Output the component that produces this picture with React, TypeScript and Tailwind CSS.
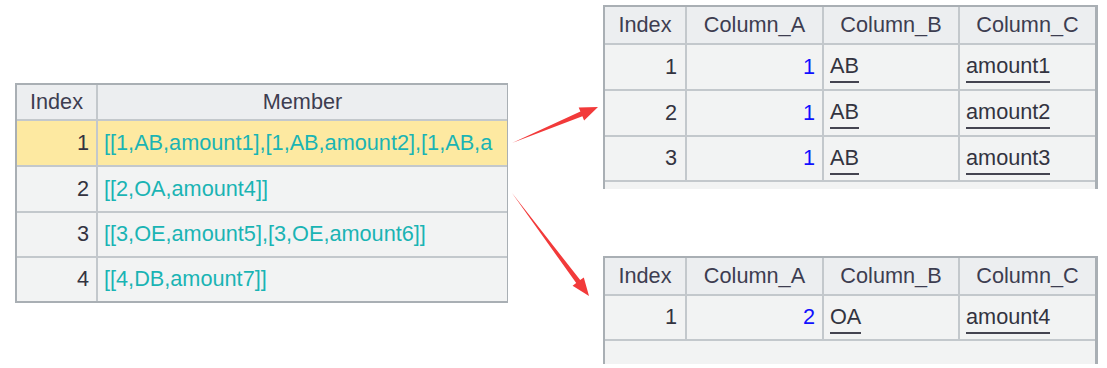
import React from "react";

const FONT = "font-['Liberation_Sans',Arial,sans-serif]";

function LeftTable() {
  const rows = [
    { i: 1, m: "[[1,AB,amount1],[1,AB,amount2],[1,AB,a", hl: true, h: "h-[46px]" },
    { i: 2, m: "[[2,OA,amount4]]", hl: false, h: "h-[46px]" },
    { i: 3, m: "[[3,OE,amount5],[3,OE,amount6]]", hl: false, h: "h-[45px]" },
    { i: 4, m: "[[4,DB,amount7]]", hl: false, h: "h-[45px]" },
  ];
  return (
    <div className="w-[493px] border-y-2 border-l-2 border-r border-[#a9afb4] bg-[#f2f3f3]">
      <div className="flex h-[34px] bg-[#eceef0] text-[#3d3d50]">
        <div className="w-[81px] flex items-center justify-center border-r-2 border-[#c3c8cc]">Index</div>
        <div className="flex-1 flex items-center justify-center">Member</div>
      </div>
      {rows.map((r) => (
        <div key={r.i} className={`flex border-t-2 border-[#c3c8cc] ${r.h} ${r.hl ? "bg-[#fde9a1]" : ""}`}>
          <div className="w-[81px] flex items-center justify-end pr-[7px] border-r-2 border-[#c3c8cc] text-[#333340]">{r.i}</div>
          <div className="flex-1 flex items-center pl-[6px] text-[#1ab4b4] whitespace-nowrap overflow-hidden">{r.m}</div>
        </div>
      ))}
    </div>
  );
}

type Row = { i: number; a: number; b: string; c: string; h: string };

function RightTable({ rows, strip }: { rows: Row[]; strip: string }) {
  const line = "border-[#c3c8cc]";
  return (
    <div className="w-[495px] border-t-2 border-l-2 border-r-[3px] border-[#a9afb4] bg-[#f2f3f3]">
      <div className="flex h-[36px] bg-[#eceef0] text-[#3d3d50]">
        <div className={`w-[82px] flex items-center justify-center border-r-2 ${line}`}>Index</div>
        <div className={`w-[137px] flex items-center justify-center border-r-2 ${line}`}>Column_A</div>
        <div className={`w-[136px] flex items-center justify-center border-r-2 ${line}`}>Column_B</div>
        <div className="flex-1 flex items-center justify-center">Column_C</div>
      </div>
      {rows.map((r) => (
        <div key={r.i} className={`flex border-t-2 ${line} ${r.h}`}>
          <div className={`w-[82px] flex items-center justify-end pr-[8px] border-r-2 ${line} text-[#333340]`}>{r.i}</div>
          <div className={`w-[137px] flex items-center justify-end pr-[7px] border-r-2 ${line} text-[#1010ff]`}>{r.a}</div>
          <div className={`w-[136px] flex items-center pl-[6px] border-r-2 ${line} text-[#333340]`}>
            <span className="inline-block border-b-2 border-[#444450] leading-[30px]">{r.b}</span>
          </div>
          <div className="flex-1 flex items-center pl-[6px] text-[#333340]">
            <span className="inline-block border-b-2 border-[#444450] leading-[30px]">{r.c}</span>
          </div>
        </div>
      ))}
      <div className={`border-t-2 ${line} ${strip}`} />
    </div>
  );
}

function Arrows() {
  return (
    <svg className="absolute left-0 top-0 pointer-events-none" width="1107" height="368" viewBox="0 0 1107 368">
      <polygon
        points="512,143 582.4,116.2 584.1,120.4 598,107 578.7,107.4 580.4,111.6"
        fill="#f23a3a"
      />
      <polygon
        points="512,193 580.2,280.1 583.8,277.4 589,296 572.6,285.8 576.2,283.1"
        fill="#f23a3a"
      />
    </svg>
  );
}

export default function App() {
  return (
    <div className={`relative w-[1107px] h-[368px] bg-white overflow-hidden text-[21.7px] ${FONT}`}>
      <div className="flex">
        <div className="ml-[15px] mt-[83px]">
          <LeftTable />
        </div>
        <div className="ml-[95px] flex flex-col">
          <div className="mt-[5px]">
            <RightTable
              rows={[
                { i: 1, a: 1, b: "AB", c: "amount1", h: "h-[46px]" },
                { i: 2, a: 1, b: "AB", c: "amount2", h: "h-[46px]" },
                { i: 3, a: 1, b: "AB", c: "amount3", h: "h-[45px]" },
              ]}
              strip="h-[9px]"
            />
          </div>
          <div className="mt-[67px]">
            <RightTable
              rows={[{ i: 1, a: 2, b: "OA", c: "amount4", h: "h-[45px]" }]}
              strip="h-[25px]"
            />
          </div>
        </div>
      </div>
      <Arrows />
    </div>
  );
}
